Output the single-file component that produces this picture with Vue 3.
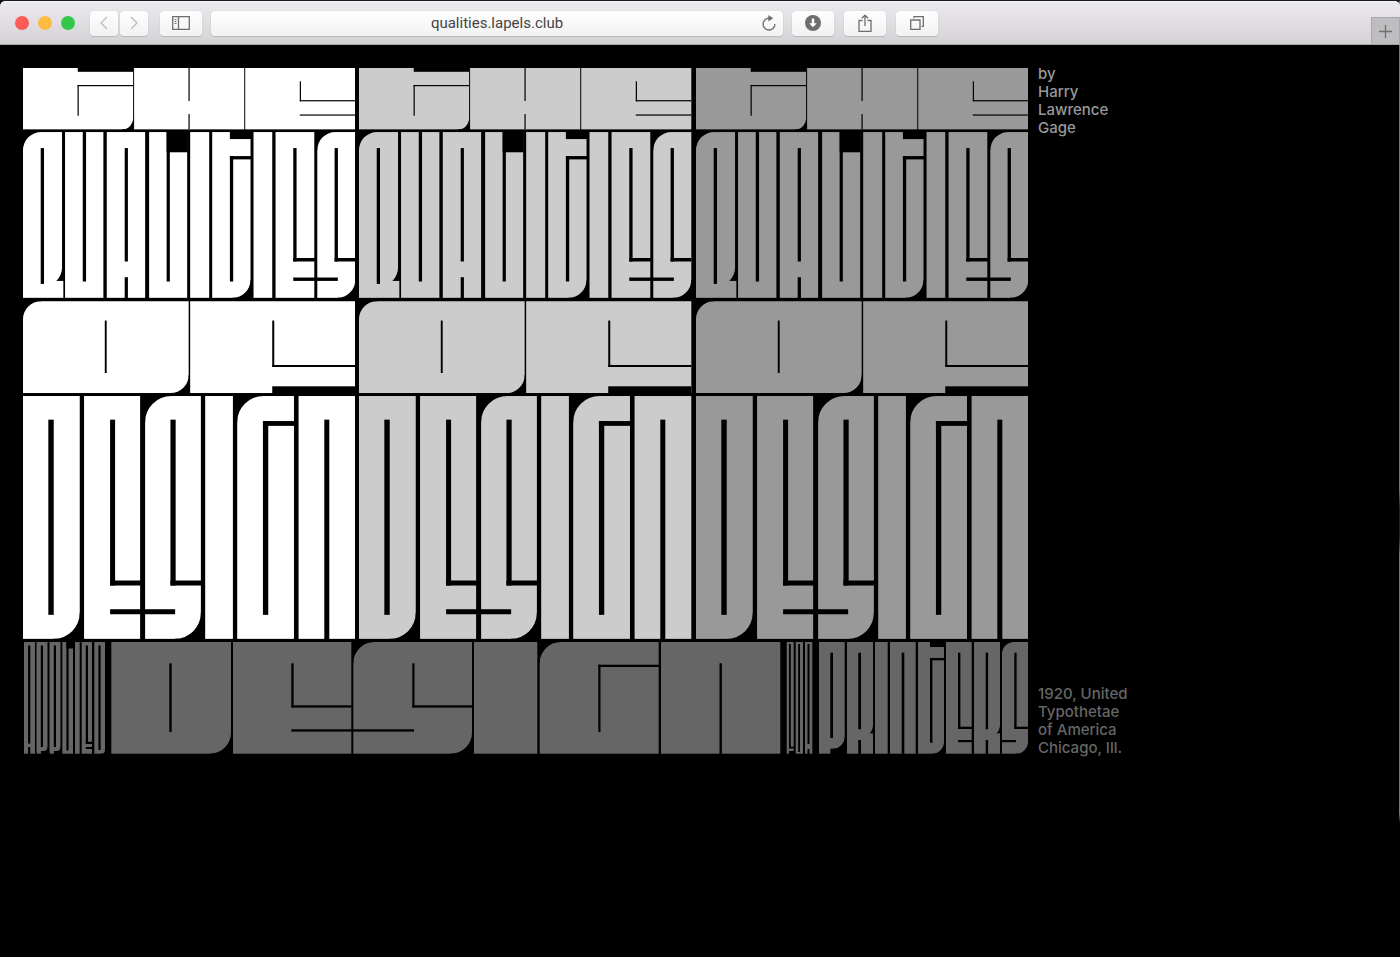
<template>
    <div class="browser">
        <header class="toolbar">
            <div class="lights">
                <span class="light light-close"></span>
                <span class="light light-min"></span>
                <span class="light light-max"></span>
            </div>

            <div class="history">
                <button class="tool tool-nav" type="button" aria-label="Back">
                    <svg width="10" height="16" viewBox="0 0 10 16"><path d="M8 2 2 8l6 6" /></svg>
                </button>
                <button class="tool tool-nav" type="button" aria-label="Forward">
                    <svg width="10" height="16" viewBox="0 0 10 16"><path d="m2 2 6 6-6 6" /></svg>
                </button>
            </div>

            <button class="tool tool-sidebar" type="button" aria-label="Show sidebar">
                <svg width="18" height="14" viewBox="0 0 18 14">
                    <path d="M.7.7h16.6v12.6H.7zM6.5 1v12" />
                    <path class="thin" d="M2.5 3.5h2M2.5 5.5h2M2.5 7.5h2" />
                </svg>
            </button>

            <div class="address">
                <input class="address-input" type="text" :value="address" aria-label="Address" readonly />
                <button class="address-reload" type="button" aria-label="Reload">
                    <svg width="14" height="16" viewBox="0 0 14 16">
                        <path d="M7.5 3.2H7A5.9 5.9 0 1 0 12.9 9" />
                        <path class="solid" d="M6.3 0 11.2 3.2 6.3 6.4z" />
                    </svg>
                </button>
            </div>

            <div class="actions">
                <button class="tool" type="button" aria-label="Downloads">
                    <svg width="16" height="16" viewBox="0 0 16 16">
                        <circle class="solid" cx="8" cy="8" r="8" />
                        <path class="arrow" d="M6.8 3.5h2.4v4.7h2.6L8 12.3 4.2 8.2h2.6z" />
                    </svg>
                </button>
                <button class="tool" type="button" aria-label="Share">
                    <svg width="14" height="18" viewBox="0 0 14 18">
                        <path d="M4.5 6.5H1v10.8h12V6.5H9.5M7 12V1.4M3.9 4.3 7 1.2l3.1 3.1" />
                    </svg>
                </button>
                <button class="tool" type="button" aria-label="Show all tabs">
                    <svg width="14" height="14" viewBox="0 0 14 14">
                        <path d="M.7 4h9.3v9.3H.7zM4 2.3V.7h9.3v9.6H11.6" />
                    </svg>
                </button>
            </div>

            <button class="new-tab" type="button" aria-label="New tab">
                <svg width="13" height="13" viewBox="0 0 13 13"><path d="M6.5 0v13M0 6.5h13" /></svg>
            </button>
        </header>

        <main class="page">
            <div class="poster" role="img" aria-label="The qualities of design applied for printers">
                <div class="panels">
                    <svg
                        v-for="tone in tones"
                        :key="tone"
                        class="lettering"
                        :class="`tone-${tone}`"
                        viewBox="0 0 332 571"
                        aria-hidden="true"
                    >
                        <template v-for="(b, i) in panelBlocks" :key="i">
                            <rect class="block" :x="b[0]" :y="b[1]" :width="b[2] - b[0]" :height="b[3] - b[1]" />
                            <path v-if="b[4]" class="cut" :d="cornerCuts(b)" />
                        </template>
                        <rect v-for="(c, i) in panelCuts" :key="i" class="cut" :x="c[0]" :y="c[1]" :width="c[2] - c[0]" :height="c[3] - c[1]" />
                    </svg>
                </div>
                <svg class="lettering tone-dark" viewBox="0 0 1005 112" aria-hidden="true">
                    <template v-for="(b, i) in footBlocks" :key="i">
                        <rect class="block" :x="b[0]" :y="b[1]" :width="b[2] - b[0]" :height="b[3] - b[1]" />
                        <path v-if="b[4]" class="cut" :d="cornerCuts(b)" />
                    </template>
                    <rect v-for="(c, i) in footCuts" :key="i" class="cut" :x="c[0]" :y="c[1]" :width="c[2] - c[0]" :height="c[3] - c[1]" />
                </svg>
            </div>

            <aside class="captions">
                <p class="caption tone-mid">by<br />Harry<br />Lawrence<br />Gage</p>
                <p class="caption tone-dark">1920, United<br />Typothetae<br />of America<br />Chicago, Ill.</p>
            </aside>
        </main>
    </div>
</template>

<script setup>
const address = 'qualities.lapels.club';
const tones = ['white', 'light', 'mid'];

// A block is [left, top, right, bottom, rounded corners, radius].
// Its rounded corners are cut off in black, a little past the edge.
function cornerCuts([x1, y1, x2, y2, corners, r]) {
    const e = 0.6;
    let d = '';
    if (corners.includes('tl')) {
        d += `M${x1 - e} ${y1 - e}H${x1 + r}V${y1}A${r} ${r} 0 0 0 ${x1} ${y1 + r}H${x1 - e}Z`;
    }
    if (corners.includes('br')) {
        d += `M${x2 + e} ${y2 + e}H${x2 - r}V${y2}A${r} ${r} 0 0 0 ${x2} ${y2 - r}H${x2 + e}Z`;
    }
    return d;
}

const panelBlocks = [
    // the
    [0, 0, 110, 61.3, 'br', 11],
    [111, 0, 221, 61.3],
    [222, 0, 332, 61.3],
    // qualities
    [0, 64, 39, 217.5, 'tl br', 18],
    [0, 212.7, 40.3, 229.6],
    [42, 64, 80.3, 229.6],
    [83.7, 64, 122, 229.6],
    [126, 64, 164, 229.6],
    [167, 64, 186, 229.6],
    [189, 64, 227.3, 229.6, 'br', 18],
    [230.3, 64, 249, 229.6],
    [252.3, 64, 291, 229.6],
    [294, 64, 332, 229.6, 'tl br', 18],
    // of
    [0, 233, 165.5, 324.7, 'tl br', 18],
    [167, 233, 332, 324.7],
    // design
    [0, 327.7, 56.7, 570.3, 'br', 26],
    [61, 327.7, 117, 570.3],
    [122, 327.7, 177.7, 570.3, 'tl br', 26],
    [182, 327.7, 209.7, 570.3],
    [214, 327.7, 270.7, 570.3, 'tl', 26],
    [275.3, 327.7, 332, 570.3]
];

const panelCuts = [
    // the
    [54.7, 0, 110, 3.8],
    [54.5, 17, 55.7, 47.7],
    [54.5, 17, 110, 18.2],
    [165.3, 0, 166.5, 33],
    [165.3, 46, 166.5, 61.3],
    [276.5, 13.3, 277.7, 33.3],
    [276.5, 32.1, 332, 33.3],
    [276.5, 46.4, 332, 47.6],
    // qualities
    [17.7, 80, 21, 215.7],
    [59.7, 64, 63, 213.3],
    [101.6, 80, 104.8, 193.3],
    [101.6, 209, 104.8, 230],
    [143.5, 64, 146.7, 213.3],
    [143.5, 63, 164.5, 84.2],
    [206.7, 63, 227.8, 71],
    [206.7, 88, 227.8, 91.3],
    [206.7, 88, 210, 213.3],
    [270, 80, 273.3, 193.3],
    [270, 189.8, 292, 193.3],
    [270, 209.3, 314.5, 212.7],
    [311.3, 80, 314.6, 193.3],
    [311.3, 189.8, 332, 193.3],
    // of
    [81.7, 252.3, 83.6, 304.7],
    [249, 252.3, 251, 298.7],
    [249, 296.7, 332, 298.7],
    [249, 318, 332, 325],
    // design
    [25.3, 351.3, 30.7, 546.3],
    [87, 351.3, 92, 517],
    [87, 512, 118, 517],
    [87, 540.7, 152, 545.7],
    [147.3, 351.3, 152.5, 517],
    [147.3, 512, 178, 517],
    [239.7, 352.7, 271, 357.5],
    [239.7, 352.7, 245, 546.3],
    [301, 351.3, 306, 571]
];

const footBlocks = [
    // applied
    [1, 0, 12, 111.7],
    [13.7, 0, 24.5, 109, 'br', 4],
    [13.7, 0, 17.9, 111.7],
    [26.7, 0, 37.5, 109, 'br', 4],
    [26.7, 0, 30.9, 111.7],
    [39.3, 0, 50, 111.7],
    [52, 0, 56.7, 111.7],
    [58.7, 0, 69, 111.7],
    [71.3, 0, 82, 111.7, 'br', 4],
    // design
    [88.3, 0, 208, 111.7, 'br', 21],
    [210, 0, 328.3, 111.7],
    [330.3, 0, 449, 111.7, 'tl br', 21],
    [451, 0, 514.3, 111.7],
    [516.7, 0, 635.7, 111.7, 'tl', 21],
    [638, 0, 757.3, 111.7],
    // for
    [763.7, 0, 770.7, 111.7],
    [772.7, 0, 780, 111.7],
    [782, 0, 789.3, 111.7],
    // printers
    [796, 0, 821.7, 106.7, 'br', 12],
    [796, 0, 807.3, 111.7],
    [824, 0, 850, 95, 'br', 12],
    [824, 91.3, 850, 111.7],
    [852, 0, 864.7, 111.7],
    [867, 0, 892.7, 111.7],
    [895, 0, 921, 111.7, 'br', 12],
    [923, 0, 948.7, 111.7],
    [951, 0, 977, 95, 'br', 12],
    [951, 91.3, 977, 111.7],
    [979, 0, 1005, 111.7, 'tl br', 12]
];

const footCuts = [
    // applied
    [5.1, 3.5, 7.3, 101.7],
    [5.1, 105, 7.3, 112],
    [17.8, 3.5, 20, 105],
    [30.8, 3.5, 33, 105],
    [43.4, 0, 50.4, 6.5],
    [43.4, 0, 45.6, 108.5],
    [62.8, 3.5, 65, 102],
    [62.8, 99.8, 69.4, 102],
    [62.8, 105, 69.4, 107],
    [75.4, 3.5, 77.6, 108],
    // design
    [146.3, 21.3, 148.7, 90],
    [268.3, 21.3, 270.6, 65.6],
    [268.3, 63.3, 328.5, 65.6],
    [268.3, 87.3, 391, 89.6],
    [389.3, 21.3, 391.5, 65.6],
    [389.3, 63.3, 449, 65.6],
    [575.3, 22.7, 636, 25],
    [575.3, 22.7, 577.5, 90],
    [696.5, 21.3, 698.9, 112],
    // for
    [766, 2, 767.8, 106.4],
    [766, 104.7, 771, 106.4],
    [766, 109, 771, 112],
    [775.2, 2, 777, 110],
    [784.5, 2, 786.5, 102],
    [784.5, 107, 786.5, 112],
    // printers
    [807.3, 10.7, 810, 96],
    [835.3, 10.7, 838, 87.3],
    [835.3, 98, 838, 112],
    [878.7, 10.7, 881.3, 112],
    [907, 0, 921.5, 5],
    [907, 16, 921.5, 18.3],
    [907, 16, 909.4, 100.7],
    [935, 10.7, 937.4, 87],
    [935, 84.7, 949, 87],
    [935, 98, 949, 100.2],
    [962.7, 10.7, 965.1, 87.3],
    [962.7, 98, 965.1, 112],
    [991.3, 10.7, 993.6, 87],
    [991.3, 84.7, 1005, 87],
    [979, 98, 993, 100.2]
];
</script>

<style>
body {
    background: #000;
}
</style>

<style scoped>
.browser {
    min-height: 100vh;
    box-sizing: border-box;
    background: linear-gradient(#777 0 51%, #222 53% 56%, #777 58% 85%, #000 86%) right / 1px 100% no-repeat #000;
    border-top: 1px solid #171a26;
    font-family: Inter, 'Liberation Sans', sans-serif;
}

.toolbar {
    height: 44px;
    box-sizing: border-box;
    display: flex;
    align-items: center;
    padding: 0 0 0 15px;
    background: linear-gradient(#edeaef, #d4d2d5);
    border-top: 1px solid #f7f3f8;
    border-bottom: 1px solid #a5a4a6;
    border-radius: 5px 5px 0 0;
}

.toolbar svg {
    display: block;
    fill: none;
    stroke: #6e6e6e;
    stroke-width: 1.3;
}

.toolbar .thin {
    stroke-width: 1;
}

.toolbar .solid {
    fill: #6e6e6e;
    stroke: none;
}

.toolbar .arrow {
    fill: #fff;
    stroke: none;
}

.lights {
    display: flex;
    gap: 9px;
    margin-right: 15px;
}

.light {
    width: 14px;
    height: 14px;
    border-radius: 50%;
}

.light-close {
    background: #fc5b57;
}

.light-min {
    background: #fdbc40;
}

.light-max {
    background: #34c84a;
}

.history {
    display: flex;
    gap: 2px;
    margin-right: 12px;
}

.tool {
    width: 42px;
    height: 25px;
    padding: 0;
    display: flex;
    flex: none;
    align-items: center;
    justify-content: center;
    background: linear-gradient(#fefefe, #f2f2f2);
    border: 0;
    border-radius: 4px;
    box-shadow: 0 0 1px #c4c2c5, 0 1px 1px #b9b7ba;
}

.tool-nav {
    width: 28px;
}

.toolbar .tool-nav svg {
    stroke: #bbb;
}

.tool-sidebar {
    margin-right: 9px;
}

.address {
    position: relative;
    flex: 0 1 572px;
    min-width: 0;
    margin-right: 9px;
}

.address-input {
    display: block;
    width: 100%;
    height: 25px;
    box-sizing: border-box;
    padding: 0 24px;
    background: linear-gradient(#fefefe, #f2f2f2);
    border: 0;
    border-radius: 4px;
    box-shadow: 0 0 1px #c4c2c5, 0 1px 1px #b9b7ba;
    color: #444;
    font-family: Roboto, sans-serif;
    font-size: 15px;
    text-align: center;
}

.address-reload {
    position: absolute;
    top: 4px;
    right: 7px;
    padding: 0;
    background: none;
    border: 0;
}

.actions {
    display: flex;
    gap: 10px;
}

.new-tab {
    width: 29px;
    height: 27px;
    margin-left: auto;
    align-self: flex-end;
    display: flex;
    align-items: center;
    justify-content: center;
    padding: 0;
    background: #bfbdc0;
    border: 1px solid #a9a8aa;
    border-width: 1px 1px 0;
}

.page {
    display: grid;
    grid-template-columns: 1005fr 339fr;
    gap: 10px;
    padding: 23px;
}

.panels {
    display: grid;
    grid-template-columns: repeat(3, 1fr);
    gap: 4px;
    margin-bottom: 2px;
}

.lettering {
    display: block;
    width: 100%;
}

.block {
    fill: currentColor;
}

.cut {
    fill: #000;
}

.tone-white {
    color: #fff;
}

.tone-light {
    color: #ccc;
}

.tone-mid {
    color: #999;
}

.tone-dark {
    color: #666;
}

.captions {
    display: flex;
    flex-direction: column;
    justify-content: space-between;
    margin: -3px 0;
}

.caption {
    margin: 0;
    font-size: 15px;
    font-weight: 500;
    line-height: 18px;
}
</style>
